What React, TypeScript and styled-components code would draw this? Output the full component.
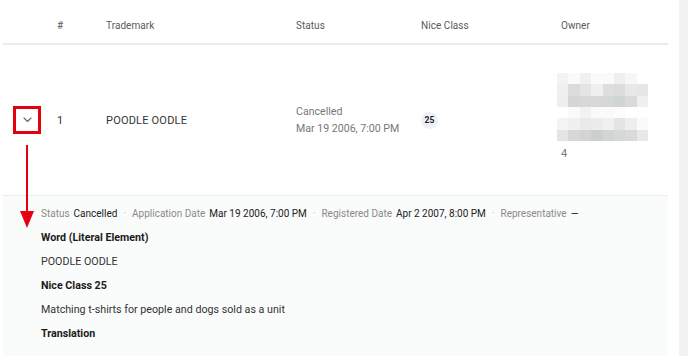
import React, { FC } from "react";
import styled, { createGlobalStyle } from "styled-components";

const GlobalStyle = createGlobalStyle`
  html, body {
    margin: 0;
    padding: 0;
    background: #ffffff;
  }
  body {
    font-family: Roboto, "Noto Sans", Arial, sans-serif;
    -webkit-font-smoothing: antialiased;
  }
`;

const OWNER_PIXELS = [
  ["#f3f3f3", "#fafafa", "#f0f0f0", "#fafafa", "#fafafa", "#efefef", "#f6f6f6", "#ffffff"],
  ["#f0f0f0", "#dcdcdc", "#e4e4e4", "#f0f0f0", "#dedede", "#dcdcdc", "#e8e8e8", "#e6e6e6"],
  ["#eeeeee", "#d6d6d6", "#d8d8d8", "#d8d8d8", "#d4d8d8", "#cfd4d4", "#dadada", "#f0f0f0"],
  ["#ffffff", "#fafafa", "#f2f2f2", "#fafafa", "#fafafa", "#fcfcfc", "#ffffff", "#ffffff"],
  ["#f4f4f4", "#f0f0f0", "#eaeaea", "#ececec", "#f0f0f0", "#e4e4e4", "#eeeeee", "#fafafa"],
  ["#e4e4e4", "#d4d8d8", "#d4d4d4", "#cccfd0", "#d4d4d4", "#d4d8d8", "#dadada", "#e8e8e8"],
];

const META = [
  { label: "Status", value: "Cancelled" },
  { label: "Application Date", value: "Mar 19 2006, 7:00 PM" },
  { label: "Registered Date", value: "Apr 2 2007, 8:00 PM" },
  { label: "Representative", value: "—" },
];

const App: FC = () => {
  return (
    <Page>
      <GlobalStyle />
      <Table>
        <HeaderRow>
          <span />
          <HeadCell>#</HeadCell>
          <HeadCell>Trademark</HeadCell>
          <HeadCell>Status</HeadCell>
          <HeadCell>Nice Class</HeadCell>
          <HeadCell indent>Owner</HeadCell>
        </HeaderRow>

        <BodyRow>
          <ToggleCell>
            <ToggleBtn aria-label="Collapse row">
              <svg width="9" height="6" viewBox="0 0 9 6" fill="none">
                <polyline
                  points="1,1 4.5,4.5 8,1"
                  stroke="#666"
                  strokeWidth="1.1"
                  strokeLinecap="round"
                  strokeLinejoin="round"
                />
              </svg>
            </ToggleBtn>
          </ToggleCell>
          <Cell>1</Cell>
          <Cell>POODLE OODLE</Cell>
          <StatusCell>
            <span>Cancelled</span>
            <span>Mar 19 2006, 7:00 PM</span>
          </StatusCell>
          <Cell>
            <Badge>25</Badge>
          </Cell>
          <OwnerCell>
            <svg width="91" height="68" viewBox="0 0 8 6" preserveAspectRatio="none" shapeRendering="crispEdges">
              {OWNER_PIXELS.map((row, y) =>
                row.map((c, x) => <rect key={`${x}-${y}`} x={x} y={y} width="1" height="1" fill={c} />)
              )}
            </svg>
            <OwnerCount>4</OwnerCount>
          </OwnerCell>
        </BodyRow>

        <Details>
          <MetaLine>
            {META.map((m, i) => (
              <React.Fragment key={m.label}>
                {i > 0 && <Dot>·</Dot>}
                <MetaLabel>{m.label}</MetaLabel>
                <MetaValue>{m.value}</MetaValue>
              </React.Fragment>
            ))}
          </MetaLine>
          <DetailLine bold>Word (Literal Element)</DetailLine>
          <DetailLine>POODLE OODLE</DetailLine>
          <DetailLine bold>Nice Class 25</DetailLine>
          <DetailLine>Matching t-shirts for people and dogs sold as a unit</DetailLine>
          <DetailLine bold>Translation</DetailLine>
        </Details>
      </Table>
      <Gutter />
      <Scrollbar />

      <Arrow width="20" height="86" viewBox="0 0 20 86">
        <line x1="10" y1="0" x2="10" y2="70" stroke="#e3000f" strokeWidth="2" />
        <polygon points="3,66 17,66 10,83" fill="#e3000f" />
      </Arrow>
    </Page>
  );
};

const Page = styled.div`
  position: relative;
  display: flex;
  width: 688px;
  height: 356px;
  overflow: hidden;
`;

const Table = styled.div`
  width: 665px;
  margin-left: 3px;
  display: flex;
  flex-direction: column;
`;

const Gutter = styled.div`
  width: 11px;
`;

const Scrollbar = styled.div`
  width: 9px;
  background: #f1f2f4;
`;

const columns = "54px 49px 190px 125px 136px 1fr";

const HeaderRow = styled.div`
  display: grid;
  grid-template-columns: ${columns};
  align-items: center;
  height: 36px;
  padding-top: 7px;
  border-bottom: 2px solid #ebebeb;
`;

const HeadCell = styled.span<{ indent?: boolean }>`
  font-size: 10px;
  letter-spacing: 0.05px;
  color: #5a5a5a;
  padding-left: ${({ indent }) => (indent ? "4px" : "0")};
`;

const BodyRow = styled.div`
  display: grid;
  grid-template-columns: ${columns};
  align-items: center;
  height: 150px;
  border-bottom: 1px solid #ececec;
`;

const ToggleCell = styled.div`
  padding-left: 10px;
  display: flex;
`;

const ToggleBtn = styled.button`
  width: 28px;
  height: 28px;
  box-sizing: border-box;
  border: 3px solid #e3000f;
  background: #ffffff;
  padding: 0;
  display: flex;
  align-items: center;
  justify-content: center;
  cursor: pointer;
`;

const Cell = styled.div`
  font-size: 11px;
  color: #333333;
  letter-spacing: 0.2px;
`;

const StatusCell = styled.div`
  display: flex;
  flex-direction: column;
  gap: 3px;
  font-size: 10.6px;
  line-height: 14px;
  color: #777777;
`;

const Badge = styled.span`
  display: inline-flex;
  align-items: center;
  justify-content: center;
  width: 17px;
  height: 17px;
  border-radius: 50%;
  background: #eef0f5;
  font-size: 8.5px;
  font-weight: 700;
  color: #222;
`;

const OwnerCell = styled.div`
  display: flex;
  flex-direction: column;
  margin-bottom: 8px;
`;

const OwnerCount = styled.span`
  font-size: 11px;
  line-height: 13px;
  color: #777;
  margin-top: 6px;
  padding-left: 4px;
`;

const Details = styled.div`
  flex: 1;
  background: #fafbfb;
  padding: 5px 0 0 38px;
`;

const MetaLine = styled.div`
  height: 24px;
  display: flex;
  align-items: center;
  font-size: 10px;
  white-space: nowrap;
`;

const MetaLabel = styled.span`
  color: #8a8a8a;
  margin-right: 4px;
`;

const MetaValue = styled.span`
  color: #222;
`;

const Dot = styled.span`
  color: #bbbbbb;
  margin: 0 6px;
`;

const DetailLine = styled.div<{ bold?: boolean }>`
  height: 24px;
  display: flex;
  align-items: center;
  font-size: 10.7px;
  font-weight: ${({ bold }) => (bold ? 700 : 400)};
  color: ${({ bold }) => (bold ? "#1a1a1a" : "#333333")};
`;

const Arrow = styled.svg`
  position: absolute;
  left: 17px;
  top: 145px;
`;

export default App;
